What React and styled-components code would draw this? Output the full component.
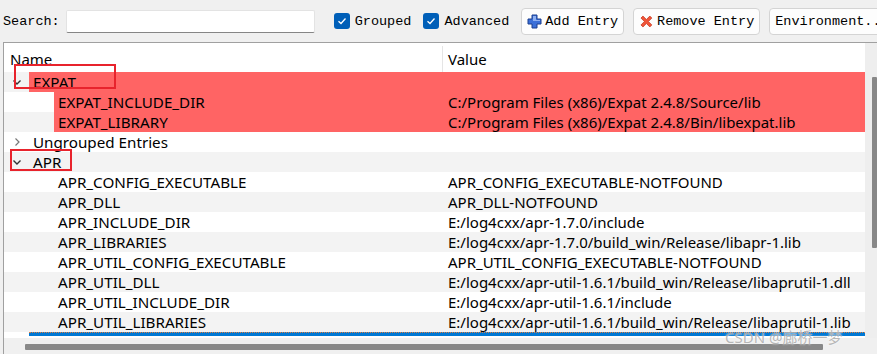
import React from 'react';
import styled, { createGlobalStyle, css } from 'styled-components';

const GlobalStyle = createGlobalStyle`
  html, body {
    margin: 0;
    padding: 0;
    background: #f0f0f0;
    overflow: hidden;
  }
`;

const Window = styled.div`
  position: relative;
  width: 877px;
  height: 354px;
  display: flex;
  flex-direction: column;
  background: #f0f0f0;
  overflow: hidden;
`;

const Toolbar = styled.div`
  height: 42px;
  display: flex;
  align-items: center;
  padding-left: 3px;
  font-family: "Liberation Mono", "DejaVu Sans Mono", monospace;
  font-size: 13.5px;
  color: #000;
  white-space: nowrap;
  & > * {
    flex-shrink: 0;
  }
`;

const SearchInput = styled.div`
  width: 247px;
  height: 21px;
  margin-left: 6px;
  margin-right: 19px;
  background: #fff;
  border: 1px solid #e3e3e3;
  border-bottom-color: #868686;
  border-radius: 2px;
`;

const Check = styled.label`
  display: flex;
  align-items: center;
  gap: 5px;
  margin-right: 12px;
`;

const Box = styled.span`
  width: 16px;
  height: 16px;
  border-radius: 3px;
  background: #005fb8;
  display: flex;
  align-items: center;
  justify-content: center;
`;

const Button = styled.div`
  height: 27px;
  display: flex;
  align-items: center;
  gap: 3px;
  padding: 0 5px;
  margin-right: 9px;
  background: #fdfdfd;
  border: 1px solid #d4d4d4;
  border-radius: 4px;
  box-sizing: border-box;
  width: ${p => p.$w}px;
`;

const Panel = styled.div`
  flex: 1;
  margin-left: 3px;
  border-left: 1px solid #a0a0a0;
  border-top: 1px solid #a0a0a0;
  display: grid;
  grid-template-columns: 1fr 12px;
  grid-template-rows: 1fr 16px;
  min-height: 0;
  font-family: "Noto Sans", "Open Sans", sans-serif;
  color: #000;
`;

const Tree = styled.div`
  background: #fff;
  overflow: hidden;
  display: flex;
  flex-direction: column;
`;

const Header = styled.div`
  height: 29px;
  flex-shrink: 0;
  display: grid;
  grid-template-columns: 439px 1fr;
  font-size: 15px;
  padding-top: 3px;
  box-sizing: border-box;
`;

const HeaderCell = styled.div`
  padding-left: ${p => p.$pad}px;
  border-right: ${p => (p.$sep ? '1px solid #e5e5e5' : 'none')};
  line-height: 26px;
`;

const Row = styled.div`
  height: 20px;
  flex-shrink: 0;
  display: grid;
  grid-template-columns: 439px 1fr;
  line-height: 20px;
  background: ${p => (p.$alt ? '#f3f3f3' : '#fff')};
  white-space: nowrap;
`;

const hot = css`
  background: #ff6464;
`;

const NameCell = styled.div`
  display: flex;
  min-width: 0;
`;

const Indent = styled.div`
  width: ${p => p.$w}px;
  flex-shrink: 0;
  display: flex;
  align-items: center;
  padding-left: 8px;
  box-sizing: border-box;
`;

const NameText = styled.div`
  flex: 1;
  padding-left: 4px;
  overflow: hidden;
  font-size: 15.2px;
  ${p => p.$hot && hot}
`;

const ValueCell = styled.div`
  padding-left: 5px;
  overflow: hidden;
  font-size: 15px;
  ${p => p.$hot && hot}
`;

const SelectedEdge = styled.div`
  height: 6px;
  flex-shrink: 0;
  display: flex;
  &::before {
    content: '';
    width: 25px;
  }
  &::after {
    content: '';
    flex: 1;
    height: 3px;
    background: #0078d4;
    border-top: 1px dotted #e08040;
  }
`;

const VScroll = styled.div`
  background: #eeeeee;
  padding-top: 34px;
  display: flex;
  justify-content: flex-end;
`;

const VThumb = styled.div`
  width: 5px;
  height: 171px;
  background: #888;
  border-radius: 1px;
`;

const HScroll = styled.div`
  grid-column: 1 / span 2;
  background: #f0f0f0;
  padding-top: 6px;
  padding-left: 21px;
`;

const HThumb = styled.div`
  width: 798px;
  height: 6px;
  background: #888;
  border-radius: 1px;
`;

const Mark = styled.div`
  position: absolute;
  border: 2px solid #e8232c;
  box-sizing: border-box;
  left: ${p => p.$x}px;
  top: ${p => p.$y}px;
  width: ${p => p.$w}px;
  height: ${p => p.$h}px;
  pointer-events: none;
`;

const Watermark = styled.div`
  position: absolute;
  left: 725px;
  top: 329px;
  font-family: "Noto Sans", "Noto Sans CJK SC", sans-serif;
  font-size: 15px;
  line-height: 16px;
  color: rgba(160, 160, 160, 0.75);
  text-shadow: 0 0 2px #fff;
  white-space: nowrap;
`;

const CheckMark = () => (
  <svg width="10" height="8" viewBox="0 0 10 8">
    <path d="M1.5 4.2 L4 6.5 L8.5 1.5" fill="none" stroke="#fff" strokeWidth="1.3" />
  </svg>
);

const PlusIcon = () => (
  <svg width="15" height="15" viewBox="0 0 15 15">
    <path
      d="M5 1 H10 V5 H14 V10 H10 V14 H5 V10 H1 V5 H5 Z"
      fill="#3b6fd8"
      stroke="#1a3f8f"
      strokeWidth="1"
    />
    <path d="M6 2 H9 V6 H13 V7 H6 Z" fill="#8fb0f0" />
  </svg>
);

const CrossIcon = () => (
  <svg width="15" height="15" viewBox="0 0 15 15">
    <path
      d="M2 4 L4 2 L7.5 5.5 L11 2 L13 4 L9.5 7.5 L13 11 L11 13 L7.5 9.5 L4 13 L2 11 L5.5 7.5 Z"
      fill="#f0553a"
      stroke="#c83a20"
      strokeWidth="0.8"
    />
  </svg>
);

const Chevron = ({ open }) => (
  <svg width="10" height="10" viewBox="0 0 10 10">
    {open ? (
      <path d="M1.5 3.5 L5 7 L8.5 3.5" fill="none" stroke="#333" strokeWidth="1.4" />
    ) : (
      <path d="M3.5 1.5 L7 5 L3.5 8.5" fill="none" stroke="#777" strokeWidth="1.2" />
    )}
  </svg>
);

const rows = [
  { name: 'EXPAT', group: true, open: true, hot: true },
  { name: 'EXPAT_INCLUDE_DIR', value: 'C:/Program Files (x86)/Expat 2.4.8/Source/lib', hot: true },
  { name: 'EXPAT_LIBRARY', value: 'C:/Program Files (x86)/Expat 2.4.8/Bin/libexpat.lib', hot: true },
  { name: 'Ungrouped Entries', group: true, open: false },
  { name: 'APR', group: true, open: true },
  { name: 'APR_CONFIG_EXECUTABLE', value: 'APR_CONFIG_EXECUTABLE-NOTFOUND' },
  { name: 'APR_DLL', value: 'APR_DLL-NOTFOUND' },
  { name: 'APR_INCLUDE_DIR', value: 'E:/log4cxx/apr-1.7.0/include' },
  { name: 'APR_LIBRARIES', value: 'E:/log4cxx/apr-1.7.0/build_win/Release/libapr-1.lib' },
  { name: 'APR_UTIL_CONFIG_EXECUTABLE', value: 'APR_UTIL_CONFIG_EXECUTABLE-NOTFOUND' },
  { name: 'APR_UTIL_DLL', value: 'E:/log4cxx/apr-util-1.6.1/build_win/Release/libaprutil-1.dll' },
  { name: 'APR_UTIL_INCLUDE_DIR', value: 'E:/log4cxx/apr-util-1.6.1/include' },
  { name: 'APR_UTIL_LIBRARIES', value: 'E:/log4cxx/apr-util-1.6.1/build_win/Release/libaprutil-1.lib' },
];

const App = () => (
  <Window>
    <GlobalStyle />
    <Toolbar>
      <span>Search:</span>
      <SearchInput />
      <Check>
        <Box><CheckMark /></Box>
        Grouped
      </Check>
      <Check>
        <Box><CheckMark /></Box>
        Advanced
      </Check>
      <Button $w={103}>
        <PlusIcon />
        Add Entry
      </Button>
      <Button $w={127}>
        <CrossIcon />
        Remove Entry
      </Button>
      <Button $w={130}>Environment...</Button>
    </Toolbar>
    <Panel>
      <Tree>
        <Header>
          <HeaderCell $pad={6} $sep>Name</HeaderCell>
          <HeaderCell $pad={5}>Value</HeaderCell>
        </Header>
        {rows.map((r, i) => (
          <Row key={r.name} $alt={i % 2 === 0}>
            <NameCell>
              <Indent $w={r.group ? 25 : 50}>
                {r.group && <Chevron open={r.open} />}
              </Indent>
              <NameText $hot={r.hot}>{r.name}</NameText>
            </NameCell>
            <ValueCell $hot={r.hot}>{r.value}</ValueCell>
          </Row>
        ))}
        <SelectedEdge />
      </Tree>
      <VScroll>
        <VThumb />
      </VScroll>
      <HScroll>
        <HThumb />
      </HScroll>
    </Panel>
    <Mark $x={14} $y={64} $w={102} $h={25} />
    <Mark $x={10} $y={149} $w={62} $h={22} />
    <Watermark>CSDN @廊桥一梦</Watermark>
  </Window>
);

export default App;
